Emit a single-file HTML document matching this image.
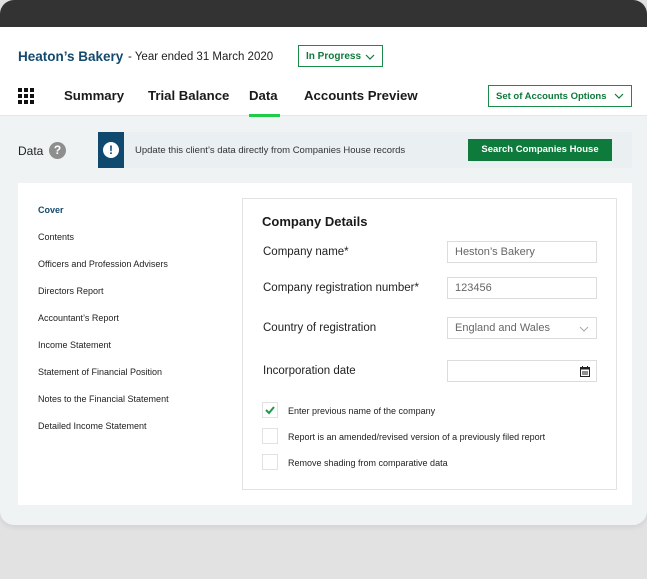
<!DOCTYPE html>
<html><head><meta charset="utf-8"><style>
*{margin:0;padding:0;box-sizing:border-box}
body{width:647px;height:579px;overflow:hidden;background:#e2e2e2;font-family:"Liberation Sans",sans-serif;position:relative;color:#222}
.frame{position:absolute;left:0;top:0;width:647px;height:525px;background:#f0f3f4;border-radius:14px;overflow:hidden;box-shadow:0 2px 6px rgba(0,0,0,.08)}
.top{position:absolute;left:0;top:0;width:647px;height:27px;background:#333}
.hdr{position:absolute;left:0;top:27px;width:647px;height:89px;background:#fff;border-bottom:1px solid #e4e6e8}
.abs{position:absolute;white-space:nowrap}
.btn{position:absolute;border:1px solid #1c8a4a;color:#0e7a3b;font-size:10px;font-weight:bold;padding-left:7px;display:flex;align-items:center}
.tab{position:absolute;top:88px;font-size:13.2px;font-weight:bold;color:#1a1a1a}
.lbl{position:absolute;left:263px;font-size:11.5px;color:#222}
.inp{position:absolute;left:447px;width:150px;height:22px;border:1px solid #dcdcdc;font-size:11px;color:#666;padding-left:7px;line-height:20px}
.nav{position:absolute;left:38px;font-size:9px;color:#222}
.cb{position:absolute;left:262px;width:16px;height:16px;border:1px solid #e2e2e2}
.ct{position:absolute;left:288px;font-size:9px;color:#222}
</style></head><body>
<div class="frame">
<div class="top"></div>
<div class="hdr"></div>
<div class="abs" style="left:18px;top:49px;font-size:13.5px;font-weight:bold;color:#134a6e">Heaton’s Bakery</div>
<div class="abs" style="left:128px;top:51px;font-size:11.5px;color:#222">- Year ended 31 March 2020</div>
<div class="btn" style="left:298px;top:45px;width:85px;height:22px">In Progress <svg style="position:absolute;right:7px;top:8px" width="10" height="6"><path d="M1 1l4 4 4-4" fill="none" stroke="#0e7a3b" stroke-width="1.2"/></svg></div>
<svg class="abs" style="left:18px;top:88px" width="16" height="16"><g fill="#111"><rect x="0" y="0" width="4" height="4"/><rect x="6" y="0" width="4" height="4"/><rect x="12" y="0" width="4" height="4"/><rect x="0" y="6" width="4" height="4"/><rect x="6" y="6" width="4" height="4"/><rect x="12" y="6" width="4" height="4"/><rect x="0" y="12" width="4" height="4"/><rect x="6" y="12" width="4" height="4"/><rect x="12" y="12" width="4" height="4"/></g></svg>
<div class="tab" style="left:64px">Summary</div>
<div class="tab" style="left:148px">Trial Balance</div>
<div class="tab" style="left:249px">Data</div>
<div class="abs" style="left:249px;top:114px;width:31px;height:3px;background:#1fcc4a"></div>
<div class="tab" style="left:304px">Accounts Preview</div>
<div class="btn" style="left:488px;top:85px;width:144px;height:22px;font-size:9.5px">Set of Accounts Options <svg style="position:absolute;right:7px;top:7px" width="10" height="6"><path d="M1 1l4 4 4-4" fill="none" stroke="#0e7a3b" stroke-width="1.2"/></svg></div>

<div class="abs" style="left:18px;top:144px;font-size:12px">Data</div>
<div class="abs" style="left:49px;top:142px;width:17px;height:17px;border-radius:50%;background:#8e8e8e;color:#fff;font-size:12px;font-weight:bold;text-align:center;line-height:17px">?</div>
<div class="abs" style="left:98px;top:132px;width:534px;height:36px;background:#eaeff2"></div>
<div class="abs" style="left:98px;top:132px;width:26px;height:36px;background:#0f4a6e"></div>
<div class="abs" style="left:103px;top:142px;width:16px;height:16px;border-radius:50%;background:#fff;color:#0f4a6e;font-size:12px;font-weight:bold;text-align:center;line-height:16px">!</div>
<div class="abs" style="left:135px;top:145px;font-size:9.5px;color:#333">Update this client’s data directly from Companies House records</div>
<div class="abs" style="left:468px;top:139px;width:144px;height:22px;background:#0e7a3b;color:#fff;font-size:9.5px;font-weight:bold;text-align:center;line-height:22px">Search Companies House</div>

<div class="abs" style="left:18px;top:183px;width:614px;height:322px;background:#fff"></div>
<div class="nav" style="top:205px;color:#134a6e;font-weight:bold">Cover</div>
<div class="nav" style="top:232px">Contents</div>
<div class="nav" style="top:259px">Officers and Profession Advisers</div>
<div class="nav" style="top:286px">Directors Report</div>
<div class="nav" style="top:313px">Accountant’s Report</div>
<div class="nav" style="top:340px">Income Statement</div>
<div class="nav" style="top:367px">Statement of Financial Position</div>
<div class="nav" style="top:394px">Notes to the Financial Statement</div>
<div class="nav" style="top:421px">Detailed Income Statement</div>

<div class="abs" style="left:242px;top:198px;width:375px;height:292px;border:1px solid #e2e2e2"></div>
<div class="abs" style="left:262px;top:214px;font-size:13px;font-weight:bold;color:#1a1a1a">Company Details</div>
<div class="lbl" style="top:246px">Company name*</div>
<div class="inp" style="top:241px">Heston’s Bakery</div>
<div class="lbl" style="top:282px">Company registration number*</div>
<div class="inp" style="top:277px">123456</div>
<div class="lbl" style="top:322px">Country of registration</div>
<div class="inp" style="top:317px">England and Wales<svg style="position:absolute;right:7px;top:8px" width="10" height="6"><path d="M1 1l4 4 4-4" fill="none" stroke="#aaa" stroke-width="1"/></svg></div>
<div class="lbl" style="top:365px">Incorporation date</div>
<div class="inp" style="top:360px"><svg style="position:absolute;right:6px;top:5px" width="10" height="11"><rect x="0.5" y="1.5" width="9" height="9" fill="none" stroke="#222"/><rect x="0.5" y="1.5" width="9" height="2" fill="#222"/><path d="M2.5 0v2M7.5 0v2M2 6h6M2 8h6" stroke="#222"/></svg></div>
<div class="cb" style="top:402px"><svg width="14" height="14"><path d="M3 7l3 3 5-6" fill="none" stroke="#1c9a4a" stroke-width="2"/></svg></div>
<div class="ct" style="top:406px">Enter previous name of the company</div>
<div class="cb" style="top:428px"></div>
<div class="ct" style="top:432px">Report is an amended/revised version of a previously filed report</div>
<div class="cb" style="top:454px"></div>
<div class="ct" style="top:458px">Remove shading from comparative data</div>
</div>
</body></html>
